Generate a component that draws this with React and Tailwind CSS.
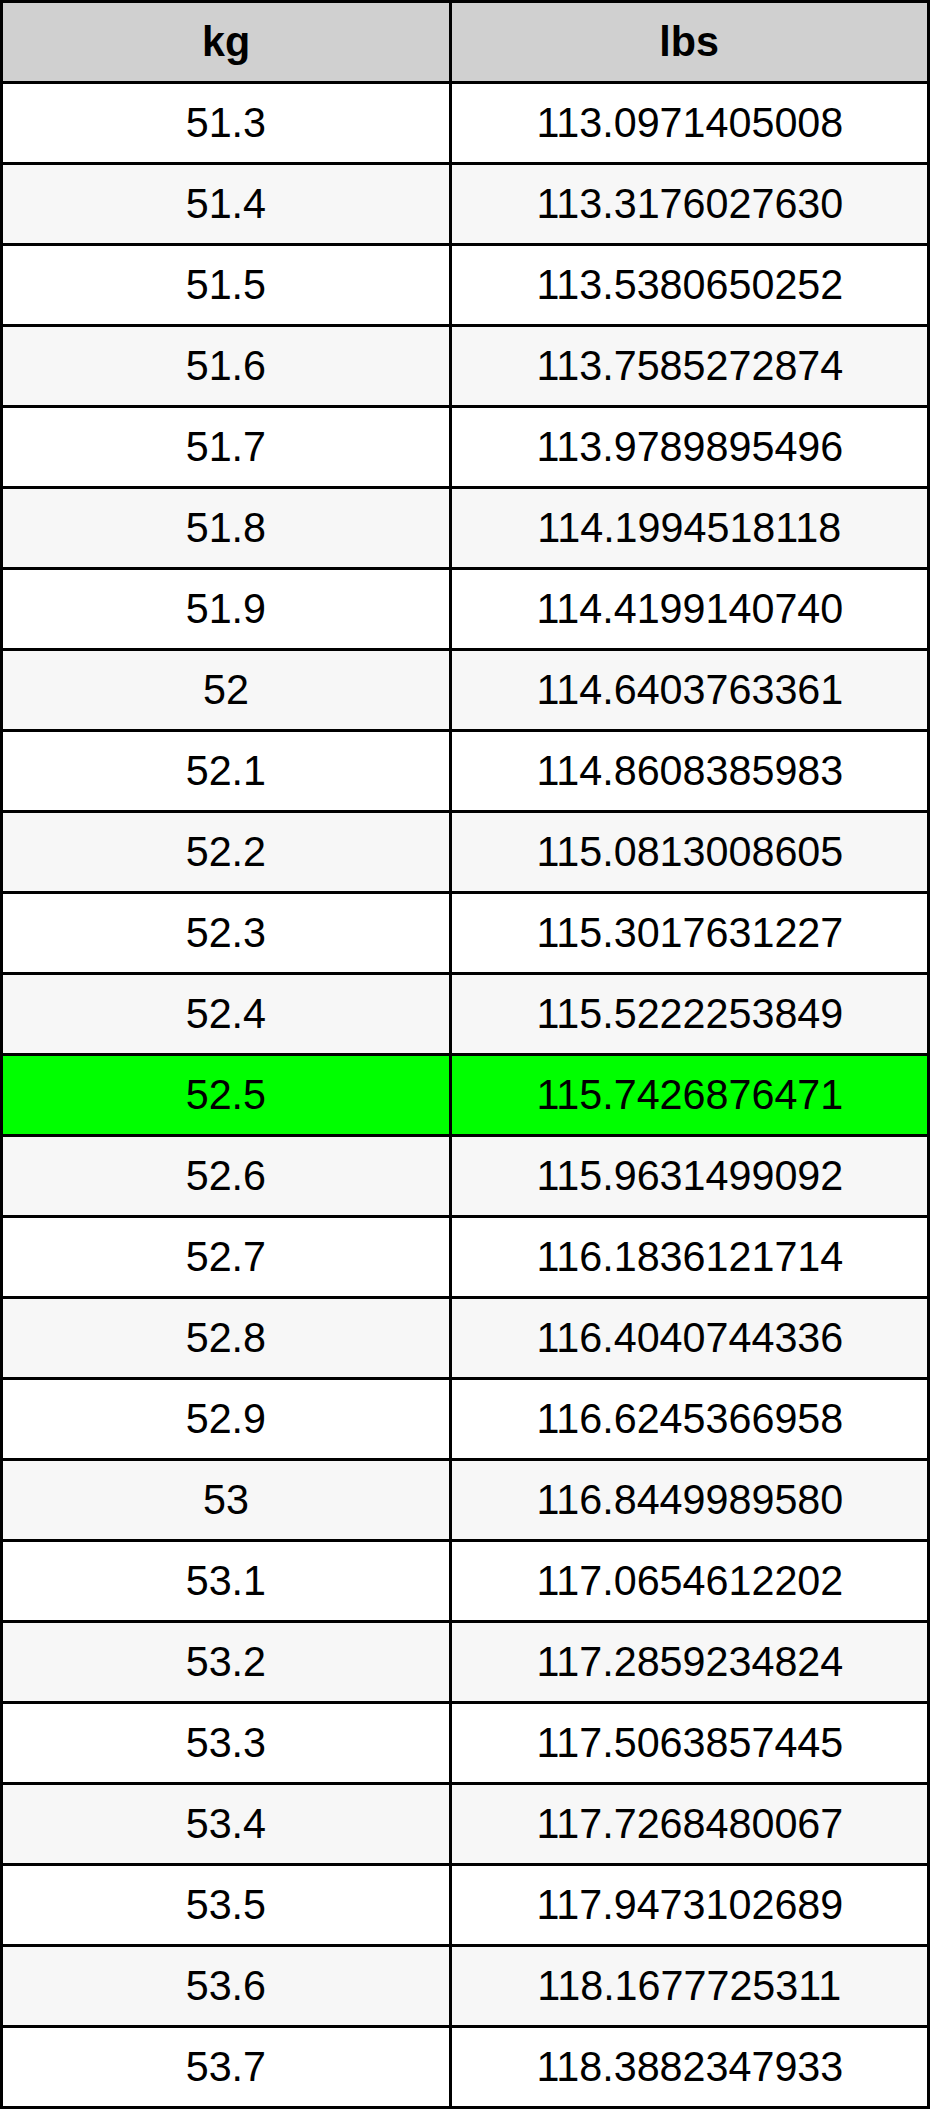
import React from 'react';

const rows = [
    ['51.3', '113.0971405008'],
    ['51.4', '113.3176027630'],
    ['51.5', '113.5380650252'],
    ['51.6', '113.7585272874'],
    ['51.7', '113.9789895496'],
    ['51.8', '114.1994518118'],
    ['51.9', '114.4199140740'],
    ['52', '114.6403763361'],
    ['52.1', '114.8608385983'],
    ['52.2', '115.0813008605'],
    ['52.3', '115.3017631227'],
    ['52.4', '115.5222253849'],
    ['52.5', '115.7426876471'],
    ['52.6', '115.9631499092'],
    ['52.7', '116.1836121714'],
    ['52.8', '116.4040744336'],
    ['52.9', '116.6245366958'],
    ['53', '116.8449989580'],
    ['53.1', '117.0654612202'],
    ['53.2', '117.2859234824'],
    ['53.3', '117.5063857445'],
    ['53.4', '117.7268480067'],
    ['53.5', '117.9473102689'],
    ['53.6', '118.1677725311'],
    ['53.7', '118.3882347933'],
];

const Cell = ({ children, bg, bold }) => (
    <div className={`${bg} h-[78px] flex items-center justify-center text-[43px] text-black leading-none ${bold ? 'font-bold' : ''}`}>
        <span className="inline-block scale-x-[0.96] -translate-y-[1px]">{children}</span>
    </div>
);

export default function App() {
    return (
        <div className="w-[930px] bg-white" style={{ fontFamily: '"Liberation Sans", Arial, sans-serif' }}>
            <div className="grid grid-cols-[446px_475px] gap-[3px] p-[3px] bg-black">
                <Cell bg="bg-[#d0d0d0]" bold>kg</Cell>
                <Cell bg="bg-[#d0d0d0]" bold>lbs</Cell>
                {rows.map(([kg, lbs], i) => {
                    const bg = kg === '52.5' ? 'bg-[#00ff00]' : i % 2 === 0 ? 'bg-white' : 'bg-[#f7f7f7]';
                    return (
                        <React.Fragment key={kg}>
                            <Cell bg={bg}>{kg}</Cell>
                            <Cell bg={bg}>{lbs}</Cell>
                        </React.Fragment>
                    );
                })}
            </div>
        </div>
    );
}
